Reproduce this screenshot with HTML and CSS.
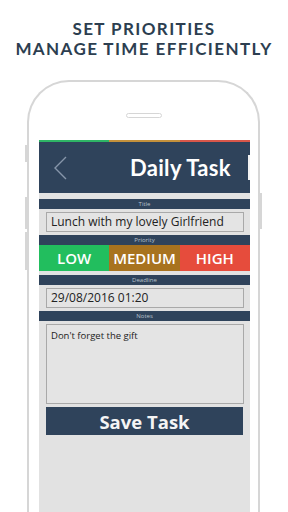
FILE: index.html
```html
<!DOCTYPE html>
<html lang="en">
<head>
  <meta charset="UTF-8">
  <title>Daily Task</title>
  <link rel="stylesheet" href="styles.css">
</head>
<body>
  <h1 class="headline">
    <span>SET PRIORITIES</span>
    <span>MANAGE TIME EFFICIENTLY</span>
  </h1>

  <div class="phone">
    <span class="side-btn mute"></span>
    <span class="side-btn vol-up"></span>
    <span class="side-btn vol-down"></span>
    <span class="side-btn power"></span>
    <div class="speaker"></div>

    <div class="screen">
      <div class="stripe">
        <span class="green"></span><span class="orange"></span><span class="red"></span>
      </div>
      <div class="header">
        <svg class="back" width="14" height="24" viewBox="0 0 14 24">
          <path d="M13 1 L2 12 L13 23" fill="none" stroke="#8796aa" stroke-width="1.4"/>
        </svg>
        <h2>Daily Task</h2>
        <span class="edge"></span>
      </div>

      <div class="label">Title</div>
      <div class="field">Lunch with my lovely Girlfriend</div>

      <div class="label">Priority</div>
      <div class="priority">
        <span class="low">LOW</span>
        <span class="medium">MEDIUM</span>
        <span class="high">HIGH</span>
      </div>

      <div class="label">Deadline</div>
      <div class="field">29/08/2016 01:20</div>

      <div class="label">Notes</div>
      <div class="field notes">Don't forget the gift</div>

      <button class="save">Save Task</button>
    </div>
  </div>
</body>
</html>
```

FILE: styles.css
```css
body {
  margin: 0;
  background-color: #fff;
  font-family: "Open Sans", Arial, sans-serif;
  overflow: hidden;
  height: 512px;
}
.headline {
  margin: 0;
  padding-top: 19px;
  display: flex;
  flex-direction: column;
  align-items: center;
  font-family: Lato, "Open Sans", Arial, sans-serif;
  font-size: 17px;
  line-height: 20px;
  font-weight: 700;
  letter-spacing: 1.4px;
  color: #2c3e50;
}
.phone {
  position: relative;
  margin: 21px 0 0 27px;
  width: 229px;
  height: 432px;
  border: 2px solid #d6d6d6;
  border-bottom: none;
  border-radius: 42px 42px 0 0;
}
.side-btn {
  position: absolute;
  width: 2px;
  background-color: #d6d6d6;
}
.mute { left: -4px; top: 63px; height: 17px; }
.vol-up { left: -4px; top: 115px; height: 32px; }
.vol-down { left: -4px; top: 150px; height: 38px; }
.power { right: -4px; top: 111px; height: 36px; }
.speaker {
  width: 34px;
  height: 3px;
  margin: 31px auto 0;
  border: 1px solid #d6d6d6;
  border-radius: 3px;
}
.screen {
  margin: 22px 8px 0 10px;
  height: 380px;
  background-color: #e2e2e2;
  display: flex;
  flex-direction: column;
  align-items: stretch;
}
.stripe {
  display: flex;
  height: 2px;
}
.stripe span { flex: 1; }
.green { background-color: #2fb566; }
.orange { background-color: #c4913c; }
.red { background-color: #d9574a; }
.header {
  height: 51px;
  background-color: #2f435b;
  display: flex;
  align-items: center;
  padding-left: 14px;
  margin-bottom: 6px;
}
.header h2 {
  margin: 0 0 0 63px;
  color: #fff;
  font-family: Lato, "Open Sans", Arial, sans-serif;
  font-size: 22px;
  font-weight: 700;
  letter-spacing: 0.3px;
}
.header .edge {
  margin-left: auto;
  width: 2px;
  height: 25px;
  background-color: #f2f2f2;
}
.label {
  height: 10px;
  background-color: #2f435b;
  color: #b9c2cd;
  font-size: 6px;
  line-height: 10px;
  text-align: center;
}
.field {
  margin: 3px 6px 3px 7px;
  height: 18px;
  border: 1px solid #a9a9a9;
  background-color: #e4e4e4;
  color: #222;
  font-size: 12px;
  line-height: 18px;
  padding-left: 4px;
  white-space: nowrap;
  overflow: hidden;
}
.field.notes {
  font-size: 9.5px;
  line-height: 12px;
  padding-top: 5px;
  height: 73px;
  margin-bottom: 3px;
}
.priority {
  display: flex;
  height: 26px;
  margin-bottom: 4px;
}
.priority span {
  flex: 1;
  color: #fff;
  font-size: 15px;
  font-weight: 600;
  line-height: 26px;
  text-align: center;
}
.low { background-color: #22be5e; }
.medium { background-color: #a8731f; }
.high { background-color: #e64c3c; }
.save {
  margin: 0 7px 0 7px;
  height: 28px;
  border: none;
  background-color: #2f435b;
  color: #f4f4f4;
  font-family: "Open Sans", Arial, sans-serif;
  font-size: 18.5px;
  font-weight: 700;
  padding: 0;
}
```
